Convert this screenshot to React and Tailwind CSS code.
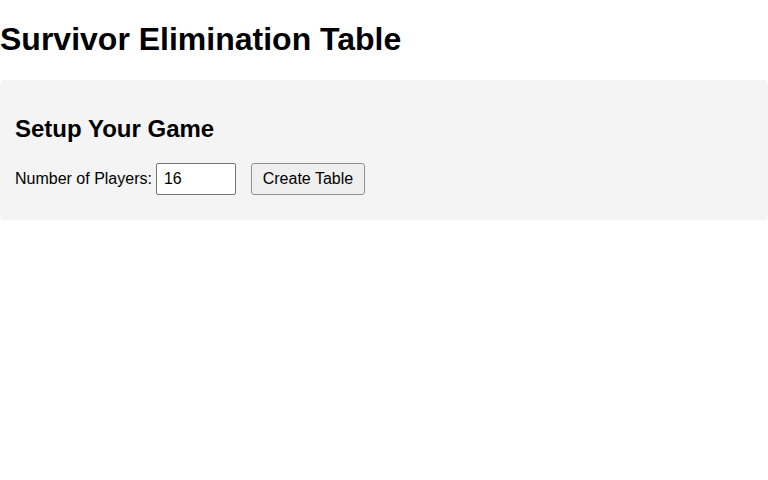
export default function App() {
  return (
    <div className="bg-white min-h-[480px] text-black" style={{ fontFamily: '"Liberation Sans", Arial, sans-serif' }}>
      <h1 className="text-[32px] leading-[37px] font-bold my-[21.44px]">Survivor Elimination Table</h1>
      <div className="bg-[#f4f4f4] rounded-[5px] p-[15px]">
        <h2 className="text-[24px] leading-[28px] font-bold my-[19.92px]">Setup Your Game</h2>
        <div className="flex items-center mb-[10px] text-[16px]">
          <label>Number of Players:</label>
          <input
            type="number"
            defaultValue={16}
            className="ml-[4px] w-[80px] h-[32px] px-[7px] border border-[#767676] rounded-[2px] bg-white text-[16px] [appearance:textfield] [&::-webkit-inner-spin-button]:appearance-none [&::-webkit-outer-spin-button]:appearance-none"
          />
          <button className="ml-[15px] w-[114px] h-[32px] border border-[#8f8f8f] rounded-[3px] bg-[#efefef] text-[16px]">
            Create Table
          </button>
        </div>
      </div>
    </div>
  );
}
